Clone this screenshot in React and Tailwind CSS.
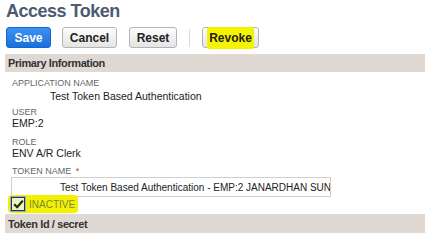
import React from 'react'

const font = { fontFamily: '"Liberation Sans", Arial, sans-serif' }

const GrayButton = ({ children, className = '' }) => (
  <button
    className={`h-[21px] rounded-[3px] border border-[#b4b4b4] bg-gradient-to-b from-[#fdfdfd] to-[#e4e4e4] text-[12px] font-bold text-[#222] flex items-center justify-center ${className}`}
  >
    {children}
  </button>
)

const Field = ({ label, value, valueClass = 'mt-[1px]', className = '' }) => (
  <div className={`flex flex-col ${className}`}>
    <div className="text-[9px] leading-[10px] uppercase text-[#666]">{label}</div>
    <div className={`text-[10.5px] leading-[11px] text-[#222] ${valueClass}`}>{value}</div>
  </div>
)

export default function App() {
  return (
    <div className="w-[425px] h-[233px] bg-white overflow-hidden" style={font}>
      <h1 className="pl-[6px] text-[18px] leading-[23px] font-bold text-[#4c5b73] tracking-[-0.5px]">
        Access Token
      </h1>

      <div className="flex items-center pl-[6px] mt-[4px] h-[21px]">
        <button className="w-[45px] h-[21px] rounded-[3px] border border-[#1266d2] bg-gradient-to-b from-[#3d92f2] to-[#1b6fdb] text-[12px] font-bold text-white">
          Save
        </button>
        <GrayButton className="w-[55px] ml-[11px]">Cancel</GrayButton>
        <GrayButton className="w-[48px] ml-[12px]">Reset</GrayButton>
        <div className="w-px h-[18px] bg-[#dadada] ml-[12px]" />
        <GrayButton className="w-[57px] ml-[12px]">
          <span className="bg-[#f4f400] px-[2px] py-[2px] rounded-[2px]">Revoke</span>
        </GrayButton>
      </div>

      <div className="ml-[5px] mt-[6px] h-[18px] bg-[#e0d9d3] flex items-center pl-[3px] text-[11px] font-bold text-[#333] tracking-[-0.4px]">
        Primary Information
      </div>

      <div className="pl-[12px] flex flex-col">
        <Field
          className="mt-[6px]"
          label="Application Name"
          value="Test Token Based Authentication"
          valueClass="mt-[3px] pl-[38px]"
        />
        <Field className="mt-[5px]" label="User" value="EMP:2" />
        <Field className="mt-[8px]" label="Role" value="ENV A/R Clerk" />
        <div className="mt-[7px] text-[9px] leading-[10px] uppercase text-[#666]">
          Token Name <span className="text-[#c33] ml-[2px]">*</span>
        </div>
      </div>

      <div className="ml-[11px] mt-[1px] w-[320px] h-[20px] border border-[#cfcfcf] flex items-center overflow-hidden whitespace-nowrap pl-[48px] text-[10px] text-[#222]">
        Test Token Based Authentication - EMP:2 JANARDHAN SUN
      </div>

      <div className="ml-[8px] mt-[-2px] flex">
        <div className="flex items-center h-[18px] bg-[#f2f200] rounded-[4px] pl-[3px] pr-[3px]">
          <div className="w-[14px] h-[14px] border border-[#2d3a1a] bg-[#eef2c0] shadow-[0_0_0_1px_#8fb0d8] flex items-center justify-center">
            <svg width="11" height="10" viewBox="0 0 11 10">
              <path d="M1.2 5.2 L4.2 8.2 L9.8 1.6" fill="none" stroke="#1f2a0c" strokeWidth="2.2" />
            </svg>
          </div>
          <span className="ml-[4px] text-[10px] text-[#7d8542] uppercase">Inactive</span>
        </div>
      </div>

      <div className="ml-[5px] mt-[1px] h-[20px] bg-[#e0d9d3] flex items-center pl-[3px] text-[11px] font-bold text-[#333] tracking-[-0.4px]">
        Token Id / secret
      </div>
    </div>
  )
}
